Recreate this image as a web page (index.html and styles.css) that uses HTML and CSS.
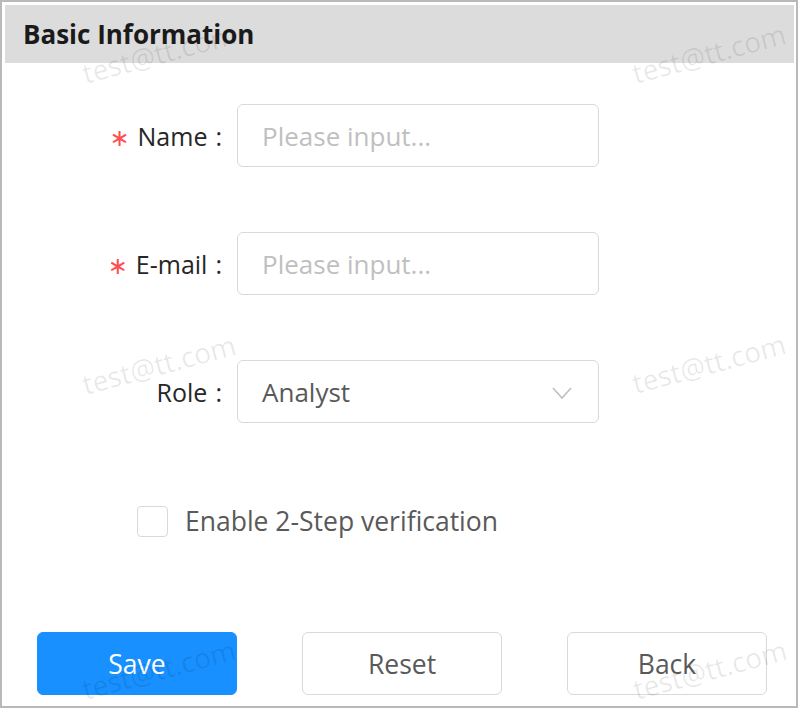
FILE: index.html
```html
<!DOCTYPE html>
<html>
<head>
<meta charset="utf-8">
<link rel="stylesheet" href="styles.css">
</head>
<body>
<div class="panel">
  <div class="header">Basic Information</div>
  <div class="form">
    <div class="row">
      <label class="label"><span class="req">∗</span>Name<span class="colon">:</span></label>
      <div class="input placeholder">Please input...</div>
    </div>
    <div class="row">
      <label class="label"><span class="req">∗</span>E-mail<span class="colon">:</span></label>
      <div class="input placeholder">Please input...</div>
    </div>
    <div class="row">
      <label class="label">Role<span class="colon">:</span></label>
      <div class="input select">
        <span class="value">Analyst</span>
        <svg class="chev" width="20" height="14" viewBox="0 0 20 14"><path d="M1 2 L10 12 L19 2" fill="none" stroke="#bfbfbf" stroke-width="1.6"/></svg>
      </div>
    </div>
    <div class="check-row">
      <span class="box"></span>
      <span class="check-text">Enable 2-Step verification</span>
    </div>
  </div>
  <div class="actions">
    <div class="btn primary">Save</div>
    <div class="btn">Reset</div>
    <div class="btn">Back</div>
  </div>
  <div class="wm wm1">test@tt.com</div>
  <div class="wm wm2">test@tt.com</div>
  <div class="wm wm3">test@tt.com</div>
  <div class="wm wm4">test@tt.com</div>
  <div class="wm wm5">test@tt.com</div>
  <div class="wm wm6">test@tt.com</div>
</div>
</body>
</html>
```
FILE: styles.css
```css
* { box-sizing: border-box; }
html, body { margin: 0; padding: 0; background: #fff; }
body { font-family: "Open Sans", "Noto Sans", sans-serif; }
.panel {
  position: relative;
  width: 798px;
  height: 708px;
  border: 2px solid #b9b9b9;
  padding: 3px 2px 0 3px;
  overflow: hidden;
}
.header {
  height: 58px;
  background: #dcdcdc;
  padding-left: 18px;
  display: flex;
  align-items: center;
  font-size: 26px;
  font-weight: 700;
  color: #1a1a1a;
}
.form { padding-top: 41px; }
.row {
  display: flex;
  align-items: center;
  height: 63px;
  margin-bottom: 65px;
}
.label {
  width: 232px;
  padding-right: 15px;
  text-align: right;
  font-size: 25px;
  color: #262626;
}
.req {
  color: #ff4d4f;
  font-family: "DejaVu Sans", sans-serif;
  font-size: 24px;
  margin-right: 8px;
}
.colon { margin-left: 8px; }
.input {
  width: 362px;
  height: 63px;
  border: 1.5px solid #d9d9d9;
  border-radius: 6px;
  padding: 0 24px;
  display: flex;
  align-items: center;
  font-size: 26px;
}
.placeholder { color: #bfbfbf; }
.select { justify-content: space-between; color: #595959; }
.chev { margin-right: 2px; margin-top: 3px; }
.check-row {
  display: flex;
  align-items: center;
  margin-top: 82px;
  padding-left: 132px;
  height: 32px;
}
.box {
  width: 31px;
  height: 31px;
  border: 1.5px solid #d9d9d9;
  border-radius: 4px;
  margin-right: 17px;
}
.check-text { font-size: 26.5px; color: #595959; }
.actions {
  display: flex;
  gap: 65px;
  padding-left: 32px;
  margin-top: 95px;
}
.btn {
  width: 200px;
  height: 63px;
  border: 1.5px solid #d9d9d9;
  border-radius: 6px;
  display: flex;
  align-items: center;
  justify-content: center;
  font-size: 26.5px;
  color: #595959;
  background: #fff;
}
.btn.primary { background: #1890ff; border-color: #1890ff; color: #fff; }
.wm {
  position: absolute;
  font-size: 28px;
  line-height: 28px;
  color: rgba(0, 0, 0, 0.09);
  transform: rotate(-15deg);
  transform-origin: center;
  white-space: nowrap;
  pointer-events: none;
}
.wm1 { left: 78px; top: 37px; }
.wm2 { left: 628px; top: 37px; }
.wm3 { left: 78px; top: 348px; }
.wm4 { left: 628px; top: 347px; }
.wm5 { left: 78px; top: 653px; }
.wm6 { left: 629px; top: 653px; }
```
